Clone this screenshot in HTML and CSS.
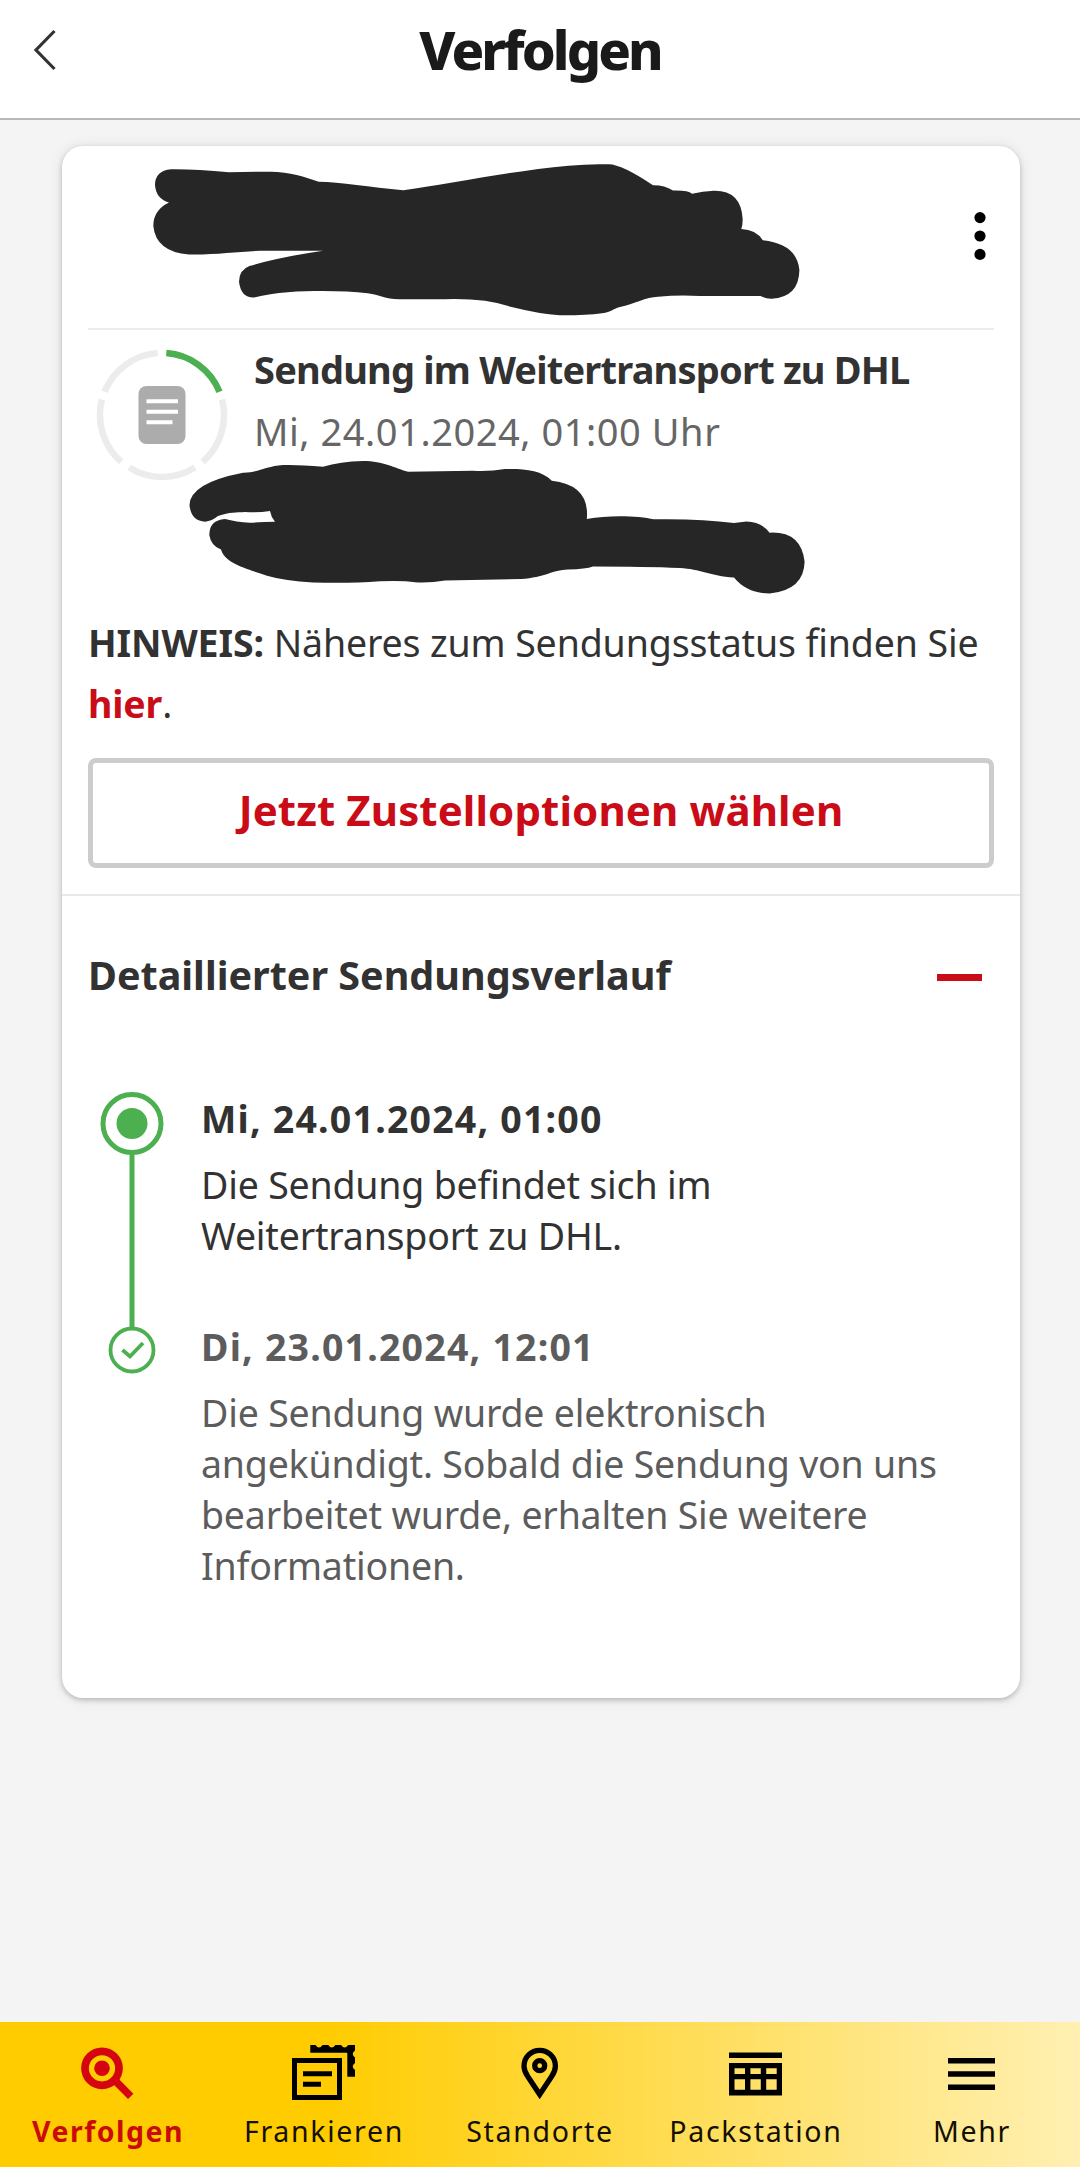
FILE: index.html
```html
<!DOCTYPE html>
<html lang="de">
<head>
<meta charset="utf-8">
<meta name="viewport" content="width=device-width, initial-scale=1">
<title>Verfolgen</title>
<link rel="stylesheet" href="styles.css">
</head>
<body>
<header class="topbar">
  <svg class="back" viewBox="0 0 24 42" fill="none" stroke="#333" stroke-width="3.200"><path d="M21.5 2 3 21l18.500 19"/></svg>
  <h1 class="topbar-title">Verfolgen</h1>
</header>

<main class="content">
  <article class="card">
    <section class="shipment">
      <svg class="shipment-mask" viewBox="150 160 655 160" fill="#262626">
        <path d="M171 169.300Q155 171 155 185Q156 199 169 202.500Q153.300 210 153.300 226Q156 252 189 254.500C220 255 245 250.500 269.500 250.700H323Q280 257 249.400 266Q239 270 239 281.700Q241 298 254 297.500C275 292 300 291 323 291Q348 291 367.700 293.300C380 295 385 299.500 401 299.200H445Q485 298 510.500 306.700Q540 314 559.600 315.300Q585 315.500 602 313.300C612 312 612 309 620 307C634 304 646 297 658 296.700Q680 294.500 700 296H760.500Q766 299 771.700 298.800Q799 297 799.400 270Q797 244 762.800 240.300Q756 229.500 741.300 229Q742.700 225 742.700 219Q741 190 713.700 190.700Q703 191 692 193.700Q688 190 673 190.500Q664 185 653 185.300Q622 164.500 608.800 164.300Q590 163.600 568.600 165.700C510 171 450 184 403.400 190.300C370 187 340 182 318.600 181.700C305 177 289 171.500 269.500 171.700Q250 171.500 229 172.200Q195 169 171 169.300Z"/>
      </svg>
      <svg class="more" viewBox="0 0 12 48"><circle cx="6" cy="5.600" r="5.600"/><circle cx="6" cy="24" r="5.600"/><circle cx="6" cy="42.400" r="5.600"/></svg>
    </section>

    <section class="status">
      <svg class="ring" viewBox="-67 -67 134 134" fill="none">
        <g stroke="#ececec" stroke-width="6.500">
          <path d="M60.100-15.400A62 62 0 0 1 40.700 46.800"/>
          <path d="M32.900 52.600A62 62 0 0 1-32.900 52.600"/>
          <path d="M-40.700 46.800A62 62 0 0 1-60.100-15.400"/>
          <path d="M-57.500-23.200A62 62 0 0 1-4.300-61.900"/>
        </g>
        <path stroke="#4caf50" stroke-width="6.500" d="M4.300-61.900A62 62 0 0 1 57.500-23.200"/>
        <rect x="-23.500" y="-29" width="47" height="58" rx="8" fill="#acacac"/>
        <path stroke="#fff" stroke-width="4" d="M-15.500-13.800h31.500M-15.500-3.300h31.500M-15.500 7.300h26"/>
      </svg>
      <div class="status-text">
        <h2 class="status-title">Sendung im Weitertransport zu DHL</h2>
        <p class="status-date">Mi, 24.01.2024, 01:00 Uhr</p>
      </div>
      <svg class="status-mask" viewBox="185 455 625 145" fill="#262626">
        <path d="M243 472.700Q190 483 189.500 505Q191 521 205 521.700Q212 521 218 516C230 512 236 512.500 245 512Q258 513 270 511Q271 517 275 521.700Q262 522 250 522.800Q236 522 225 519Q209.300 520 209.300 535Q211 546 221 549.500C225 563 244 568 267 575.700Q285 581 313 582.500Q350 583.500 380 581.300Q403 580.500 415 582.200Q430 583 445 580.500L521 579C545 577.500 552 570 568 569.500Q586 569 593 566.500Q645 566.500 680 568C700 569 710 576 734 577.500Q747 593.500 769.600 593.500Q804 590 804.600 561.700Q801 531 769.600 532.700Q762 522 746.400 521.500L734 523Q700 518.500 653.600 519.300C640 516 610 514.500 586.800 519Q590 485 551.800 480.700C542 470 523 468.500 505 469Q490 471.500 473 470.700L408 471.700C394 468 384 461 363 461Q340 461.500 323 466.700Q298 464.500 283 465C266 466 258 473 243 472.700Z"/>
      </svg>
    </section>

    <p class="hint"><b>HINWEIS:</b> Näheres zum Sendungsstatus finden Sie <a class="hint-link">hier</a>.</p>
    <button class="options" type="button">Jetzt Zustelloptionen wählen</button>

    <section class="history">
      <header class="history-head">
        <h2 class="history-title">Detaillierter Sendungsverlauf</h2>
        <span class="collapse"></span>
      </header>
      <ol class="timeline">
        <li class="event">
          <svg class="marker" viewBox="0 0 64 228" fill="none" stroke="#4caf50"><path stroke-width="5" d="M32 62V236"/><circle cx="32" cy="32.500" r="29" stroke-width="5"/><circle cx="32" cy="32.500" r="15.500" fill="#4caf50" stroke="none"/></svg>
          <div class="event-text">
            <h3 class="event-date">Mi, 24.01.2024, 01:00</h3>
            <p class="event-body">Die Sendung befindet sich im<br>Weitertransport zu DHL.</p>
          </div>
        </li>
        <li class="event event-past">
          <svg class="marker" viewBox="0 0 64 228" fill="none" stroke="#4caf50"><circle cx="32" cy="31" r="21.500" stroke-width="3.800"/><path stroke-width="3.800" d="M22.500 31l7.500 6.500 13-13.500"/></svg>
          <div class="event-text">
            <h3 class="event-date">Di, 23.01.2024, 12:01</h3>
            <p class="event-body">Die Sendung wurde elektronisch angekündigt. Sobald die Sendung von uns bearbeitet wurde, erhalten Sie weitere Informationen.</p>
          </div>
        </li>
      </ol>
    </section>
  </article>
</main>

<nav class="tabs">
  <a class="tab tab-active">
    <svg class="tab-icon" viewBox="0 0 64 64" fill="none" stroke="#d40511"><circle cx="26" cy="28.300" r="17" stroke-width="7.700"/><circle cx="26" cy="28.300" r="7.800" fill="#d40511" stroke="none"/><path stroke-width="7.500" d="M38.500 40 54.700 56.300"/></svg>
    <span>Verfolgen</span>
  </a>
  <a class="tab">
    <svg class="tab-icon" viewBox="0 0 64 64"><path fill="none" stroke="#000" stroke-width="5" d="M2.500 20.500h45v37h-45zM11 33.800h29M11 44.200h18"/><path d="M18.300 5h5.200q3.500 5 7 0h5.800q3.500 5 7 0h5.800q3.500 5 7 0H63v5.500q-4.500 3.500 0 7v5.500q-4.500 3.500 0 7v6.700h-7.700v-24h-37z"/></svg>
    <span>Frankieren</span>
  </a>
  <a class="tab">
    <svg class="tab-icon" viewBox="0 0 64 64" fill="none" stroke="#000" stroke-width="5.300"><path d="M31.700 54.500 19.800 36.500C17 32.500 16 29.500 16 26a15.700 15.700 0 0 1 31.400 0c0 3.500-1 6.500-3.800 10.500z"/><circle cx="31.700" cy="25.700" r="5"/></svg>
    <span>Standorte</span>
  </a>
  <a class="tab">
    <svg class="tab-icon" viewBox="0 0 64 64"><path fill-rule="evenodd" d="M5 12.500h53V18H5zM5 23h53v32.500H5zM10.500 28.300V34H21v-5.700zM26.400 28.300V34h10.400v-5.700zM42.200 28.300V34h10.500v-5.700zM10.500 39.200v10.500H21V39.200zM26.400 39.200v10.500h10.400V39.200zM42.200 39.200v10.500h10.500V39.200z"/></svg>
    <span>Packstation</span>
  </a>
  <a class="tab">
    <svg class="tab-icon" viewBox="0 0 64 64"><path d="M8 18h47v5.500H8zM8 31.200h47v5.500H8zM8 44.500h47V50H8z"/></svg>
    <span>Mehr</span>
  </a>
</nav>
</body>
</html>
```
FILE: styles.css
```css
* {
  box-sizing: border-box;
  margin: 0;
  padding: 0;
}

body {
  display: flex;
  flex-direction: column;
  min-height: 2167px;
  background: #f4f4f4;
  color: #323232;
  font-family: "Noto Sans", "Open Sans", sans-serif;
  font-size: 37.5px;
}

svg {
  display: block;
  flex: none;
}

/* Top bar */
.topbar {
  display: grid;
  grid-template-columns: 56px 1fr 56px;
  height: 120px;
  background: #fff;
  border-bottom: 2px solid #b8b8b8;
}

.back {
  width: 24px;
  height: 42px;
  margin: 29px 0 0 33px;
}

.topbar-title {
  color: #1a1a1a;
  font-size: 54px;
  font-weight: 800;
  letter-spacing: -2.9px;
  line-height: 98px;
  text-align: center;
}

/* Card */
.content {
  flex: 1;
  padding: 26px 60px 0 62px;
}

.card {
  padding: 0 26px 107px;
  background: #fff;
  border-radius: 21px;
  box-shadow: 0 2px 5px rgba(0, 0, 0, .2), 0 1px 14px rgba(0, 0, 0, .1);
}

.shipment {
  display: flex;
  justify-content: space-between;
  align-items: flex-start;
  height: 184px;
  padding: 14px 8px 0 62px;
  border-bottom: 2px solid #ececec;
}

.shipment-mask {
  width: 655px;
  height: 160px;
}

.more {
  width: 12px;
  height: 48px;
  margin-top: 52px;
}

.status {
  position: relative;
  display: flex;
  gap: 25px;
  height: 282px;
  padding: 8px 0 0 7px;
}

.ring {
  width: 134px;
  height: 134px;
  margin-top: 10px;
}

.status-title,
.status-date {
  font-size: 38px;
  line-height: 62px;
  white-space: nowrap;
}

.status-title {
  letter-spacing: -.8px;
}

.status-date {
  color: #666;
  letter-spacing: .55px;
}

/* Scribble lying over the redacted line */
.status-mask {
  position: absolute;
  left: 97px;
  top: 125px;
  width: 625px;
  height: 145px;
}

.hint {
  letter-spacing: -.13px;
  line-height: 61px;
}

.hint b {
  letter-spacing: -.1px;
}

.hint-link {
  color: #c90c17;
  font-weight: 700;
}

.options {
  display: block;
  width: 100%;
  height: 110px;
  margin: 24px 0 26px;
  padding-bottom: 7px;
  background: #fff;
  border: 5px solid #ccc;
  border-radius: 8px;
  color: #c90c17;
  font: 700 42px "Noto Sans", "Open Sans", sans-serif;
  letter-spacing: .1px;
}

/* History */
.history {
  margin: 0 -26px;
  padding: 0 26px;
  border-top: 2px solid #e8e8e8;
}

.history-head {
  display: flex;
  justify-content: space-between;
  align-items: center;
  height: 157px;
  padding-right: 12px;
}

.history-title {
  font-size: 39.5px;
}

.collapse {
  width: 45px;
  height: 7px;
  margin-top: 6px;
  background: #c90c17;
}

.timeline {
  padding-top: 38px;
  list-style: none;
}

.event {
  display: flex;
  gap: 37px;
  height: 228px;
  padding-left: 12px;
}

.event-past {
  height: 272px;
  color: #5c5c5c;
}

.marker {
  width: 64px;
  height: 228px;
  overflow: visible;
}

.event-text {
  max-width: 760px;
}

.event-date {
  margin-bottom: 12px;
  font-size: 37.5px;
  letter-spacing: 1.2px;
  line-height: 56px;
}

.event-body {
  letter-spacing: -.2px;
  line-height: 51px;
}

/* Bottom navigation */
.tabs {
  display: grid;
  grid-template-columns: repeat(5, 1fr);
  height: 145px;
  background: linear-gradient(90deg, #fc0 30%, #ffe57f 79%, #fff0b2);
}

.tab {
  display: flex;
  flex-direction: column;
  align-items: center;
  gap: 7px;
  padding-top: 18px;
  color: #140f00;
  font-size: 28.5px;
  letter-spacing: 1.7px;
  line-height: 40px;
}

.tab-active {
  color: #c90c0a;
  font-weight: 700;
  letter-spacing: 1.5px;
}

.tab-icon {
  width: 64px;
  height: 64px;
}
```
